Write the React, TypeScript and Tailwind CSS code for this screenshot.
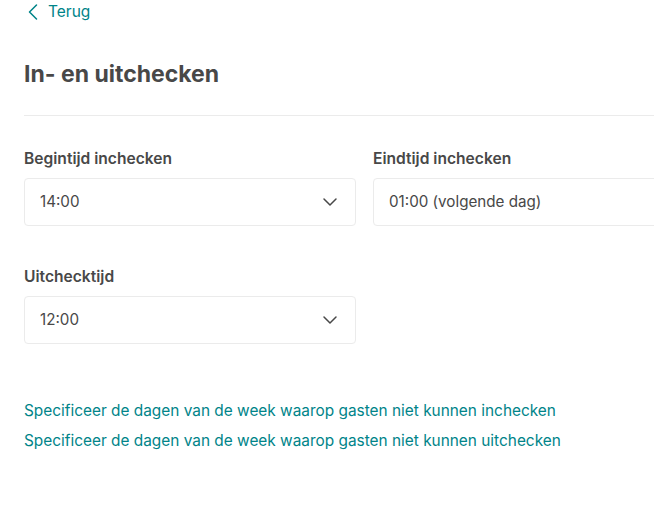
import { ChevronLeft, ChevronDown } from "lucide-react";

const FONT = { fontFamily: '"Inter", "Noto Sans", sans-serif' };

function Field({ label, value, chevron = true }: { label: string; value: string; chevron?: boolean }) {
  return (
    <div className="w-[332px] shrink-0">
      <div className="text-[15.6px] font-semibold leading-5 text-[#484848]">{label}</div>
      <div className="mt-[9px] flex h-[48px] items-center justify-between rounded-[4px] border border-[#ebebeb] pl-[15px] pr-[13px]">
        <span className="text-[15.2px] text-[#484848]">{value}</span>
        {chevron && <ChevronDown className="h-[24px] w-[24px] text-[#484848]" strokeWidth={1.5} />}
      </div>
    </div>
  );
}

export default function App() {
  return (
    <div className="h-[512px] w-[654px] overflow-hidden bg-white" style={FONT}>
      <div className="w-[700px] pl-[24px]">
        <div className="flex h-[24px] items-center text-[#008489]">
          <ChevronLeft className="-ml-[5px] h-[28px] w-[28px]" strokeWidth={1.3} />
          <span className="ml-[1px] text-[15.5px]">Terug</span>
        </div>
        <h1 className="mt-[36px] text-[23px] font-bold leading-7 text-[#484848]">In- en uitchecken</h1>
        <div className="mt-[27px] h-px bg-[#ebebeb]" />
        <div className="mt-[33px] flex gap-[17px]">
          <Field label="Begintijd inchecken" value="14:00" />
          <Field label="Eindtijd inchecken" value="01:00 (volgende dag)" chevron={false} />
        </div>
        <div className="mt-[41px]">
          <Field label="Uitchecktijd" value="12:00" />
        </div>
        <div className="mt-[57px] flex flex-col gap-[10px] text-[15.4px] leading-5 text-[#008489]">
          <span>Specificeer de dagen van de week waarop gasten niet kunnen inchecken</span>
          <span>Specificeer de dagen van de week waarop gasten niet kunnen uitchecken</span>
        </div>
      </div>
    </div>
  );
}
